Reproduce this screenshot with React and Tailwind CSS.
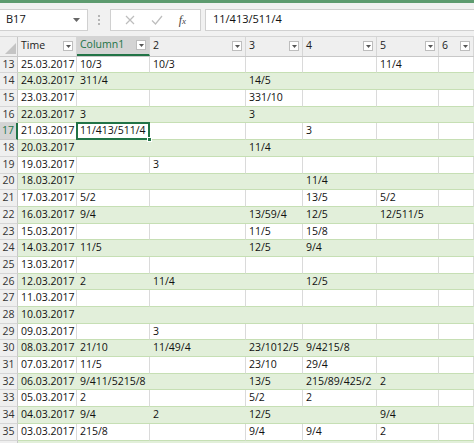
import React from "react";

const font = { fontFamily: '"Open Sans", "Noto Sans", sans-serif' };

const colW = ["w-[59px]", "w-[73px]", "w-[96px]", "w-[57px]", "w-[74px]", "w-[62px]", "flex-1"];
const headers = ["Time", "Column1", "2", "3", "4", "5", "6"];

const rows = [
  [13, "25.03.2017", "10/3", "10/3", "", "", "11/4", ""],
  [14, "24.03.2017", "311/4", "", "14/5", "", "", ""],
  [15, "23.03.2017", "", "", "331/10", "", "", ""],
  [16, "22.03.2017", "3", "", "3", "", "", ""],
  [17, "21.03.2017", "11/413/511/4", "", "", "3", "", ""],
  [18, "20.03.2017", "", "", "11/4", "", "", ""],
  [19, "19.03.2017", "", "3", "", "", "", ""],
  [20, "18.03.2017", "", "", "", "11/4", "", ""],
  [21, "17.03.2017", "5/2", "", "", "13/5", "5/2", ""],
  [22, "16.03.2017", "9/4", "", "13/59/4", "12/5", "12/511/5", ""],
  [23, "15.03.2017", "", "", "11/5", "15/8", "", ""],
  [24, "14.03.2017", "11/5", "", "12/5", "9/4", "", ""],
  [25, "13.03.2017", "", "", "", "", "", ""],
  [26, "12.03.2017", "2", "11/4", "", "12/5", "", ""],
  [27, "11.03.2017", "", "", "", "", "", ""],
  [28, "10.03.2017", "", "", "", "", "", ""],
  [29, "09.03.2017", "", "3", "", "", "", ""],
  [30, "08.03.2017", "21/10", "11/49/4", "23/1012/5", "9/4215/8", "", ""],
  [31, "07.03.2017", "11/5", "", "23/10", "29/4", "", ""],
  [32, "06.03.2017", "9/411/5215/8", "", "13/5", "215/89/425/2", "2", ""],
  [33, "05.03.2017", "2", "", "5/2", "2", "", ""],
  [34, "04.03.2017", "9/4", "2", "12/5", "", "9/4", ""],
  [35, "03.03.2017", "215/8", "", "9/4", "9/4", "2", ""],
  [36, "", "", "", "", "", "", ""],
];

function Drop() {
  return (
    <div className="w-[10px] h-[10px] bg-white border border-[#bdbdbd] flex items-center justify-center mr-[3px] shrink-0">
      <svg width="5" height="3" viewBox="0 0 5 3">
        <path d="M0 0 L5 0 L2.5 3 Z" fill="#555" />
      </svg>
    </div>
  );
}

export default function App() {
  return (
    <div className="w-[474px] h-[443px] overflow-hidden bg-white text-[10.5px] text-[#111]" style={font}>
      <div className="h-[3px] bg-[#5d9b6f]" />
      {/* formula bar */}
      <div className="h-[34px] bg-[#f1f1f1] flex items-center border-b border-[#d4d4d4]">
        <div className="w-[88px] h-[22px] bg-white border border-l-0 border-[#d0d0d0] flex items-center justify-between pl-[6px] pr-[7px] text-[11px]">
          <span>B17</span>
          <svg width="7" height="4" viewBox="0 0 7 4">
            <path d="M0 0 L7 0 L3.5 4 Z" fill="#666" />
          </svg>
        </div>
        <div className="w-[22px] flex flex-col items-center gap-[2px]">
          <span className="w-[2px] h-[2px] bg-[#b5b5b5]" />
          <span className="w-[2px] h-[2px] bg-[#b5b5b5]" />
          <span className="w-[2px] h-[2px] bg-[#b5b5b5]" />
        </div>
        <div className="w-[91px] h-[22px] bg-white border border-[#d0d0d0] flex items-center justify-around px-[6px]">
          <svg width="10" height="10" viewBox="0 0 10 10">
            <path d="M1 1 L9 9 M9 1 L1 9" stroke="#bdbdbd" strokeWidth="1.2" />
          </svg>
          <svg width="12" height="10" viewBox="0 0 12 10">
            <path d="M1 5.5 L4.5 9 L11 1" stroke="#bdbdbd" strokeWidth="1.2" fill="none" />
          </svg>
          <span className="text-[#444] italic text-[12px] leading-none" style={{ fontFamily: '"Liberation Serif", serif' }}>
            f<span className="text-[9px]">x</span>
          </span>
        </div>
        <div className="flex-1 h-[22px] bg-white border border-r-0 border-[#d0d0d0] ml-[4px] flex items-center pl-[7px] text-[11px]">
          11/413/511/4
        </div>
      </div>
      {/* header row */}
      <div className="h-[19.7px] flex bg-[#efefef] border-b border-[#c8c8c8]">
        <div className="w-[18px] shrink-0 relative border-r border-[#c8c8c8]">
          <svg className="absolute right-[1px] bottom-[2px]" width="11" height="11" viewBox="0 0 11 11">
            <path d="M11 0 L11 11 L0 11 Z" fill="#c4c4c4" />
          </svg>
        </div>
        {headers.map((h, i) => (
          <div
            key={h}
            className={`${colW[i]} shrink-0 flex items-center justify-between pl-[3px] border-r border-[#d6d6d6] ${
              i === 1 ? "bg-[#d4d4d4] text-[#217346] border-b-2 border-b-[#217346]" : "text-[#222]"
            }`}
          >
            <span>{h}</span>
            <Drop />
          </div>
        ))}
      </div>
      {/* data rows */}
      {rows.map((r) => {
        const green = r[0] % 2 === 0;
        const sel = r[0] === 17;
        return (
          <div key={r[0]} className="h-[16.7px] flex">
            <div
              className={`w-[18px] shrink-0 flex items-center justify-center border-b border-r ${
                sel ? "bg-[#d4d4d4] text-[#217346] border-r-2 border-r-[#217346] border-b-[#c8c8c8]" : "bg-[#efefef] text-[#333] border-[#d6d6d6] border-r-[#c8c8c8]"
              }`}
            >
              {r[1] ? r[0] : ""}
            </div>
            {r.slice(1).map((v, ci) => (
              <div
                key={ci}
                className={`${colW[ci]} shrink-0 relative flex items-center pl-[3px] whitespace-nowrap overflow-visible border-b ${
                  green ? "bg-[#e2efda] border-b-[#c6dfb4]" : "bg-white border-b-[#c6dfb4] border-r border-r-[#dadada]"
                }`}
              >
                <span className="relative z-10">{v}</span>
                {sel && ci === 1 && (
                  <div className="absolute -left-[1px] -top-[1px] -right-[1px] -bottom-[1px] border-2 border-[#217346] z-20">
                    <div className="absolute -right-[4px] -bottom-[4px] w-[5px] h-[5px] bg-[#217346] border border-white" />
                  </div>
                )}
              </div>
            ))}
          </div>
        );
      })}
    </div>
  );
}
